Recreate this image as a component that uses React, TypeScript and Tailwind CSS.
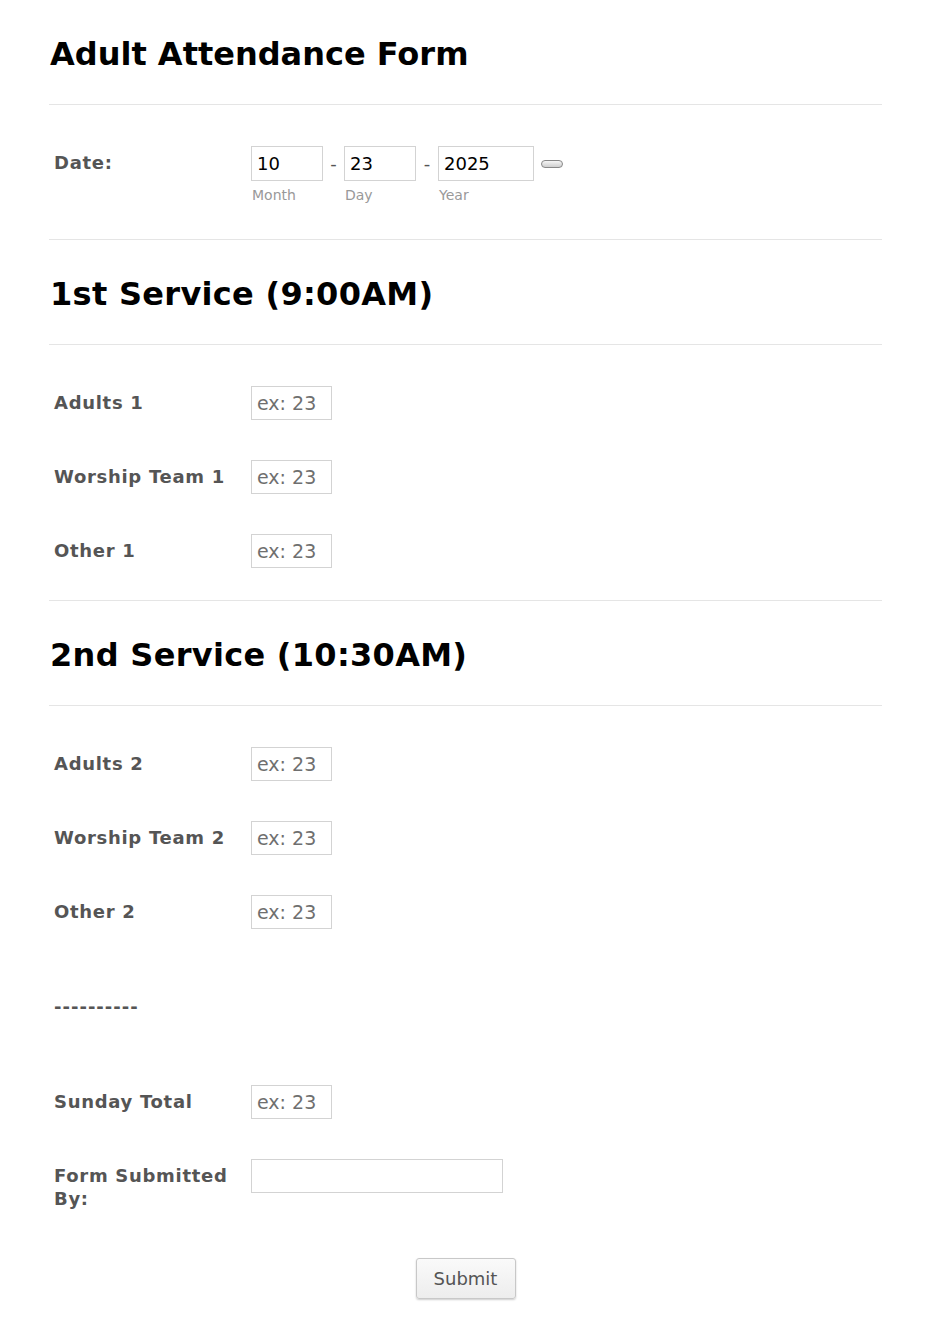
import React from "react";

const font = { fontFamily: '"DejaVu Sans", Verdana, sans-serif' };

function Divider() {
  return <div className="h-px bg-[#e5e5e5]" />;
}

function Heading({ children }: { children: React.ReactNode }) {
  return (
    <div className="pl-[1px] pt-[34px] pb-[30px]">
      <h2 className="text-[32px] leading-[40px] font-bold tracking-[0.3px] text-black">{children}</h2>
    </div>
  );
}

function Label({ children }: { children: React.ReactNode }) {
  return (
    <div className="w-[202px] shrink-0 pl-[5px] pr-[20px] pt-[5px] text-[18px] leading-[23px] font-bold tracking-[0.7px] text-[#555]">
      {children}
    </div>
  );
}

function NumberRow({ label }: { label: string }) {
  return (
    <div className="flex items-start">
      <Label>{label}</Label>
      <input
        type="text"
        placeholder="ex: 23"
        className="w-[81px] h-[34px] border border-[#d3d3d3] px-[5px] text-[19px] text-black placeholder:text-[#6f6f6f] outline-none"
        style={font}
      />
    </div>
  );
}

function DatePart({ value, sub, w }: { value: string; sub: string; w: string }) {
  return (
    <div className="flex flex-col">
      <input
        type="text"
        defaultValue={value}
        className={`${w} h-[35px] border border-[#d3d3d3] px-[5px] text-[18px] text-black outline-none`}
        style={font}
      />
      <span className="mt-[6px] pl-[1px] text-[14px] leading-[16px] text-[#999]">{sub}</span>
    </div>
  );
}

export default function App() {
  return (
    <div className="min-h-[1330px] bg-white" style={font}>
      <div className="ml-[49px] w-[833px]">
        <div className="pt-[34px] pb-[30px]">
          <h1 className="pl-[1px] text-[32px] leading-[40px] font-bold text-black">Adult Attendance Form</h1>
        </div>
        <Divider />

        <div className="flex items-start pt-[41px] pb-[36px]">
          <Label>Date:</Label>
          <div className="flex items-start">
            <DatePart value="10" sub="Month" w="w-[72px]" />
            <span className="w-[21px] text-center text-[18px] leading-[35px] text-[#555]">-</span>
            <DatePart value="23" sub="Day" w="w-[72px]" />
            <span className="w-[22px] text-center text-[18px] leading-[35px] text-[#555]">-</span>
            <DatePart value="2025" sub="Year" w="w-[96px]" />
            <button className="ml-[7px] mt-[14px] w-[22px] h-[8px] rounded-full border border-[#888] bg-gradient-to-b from-[#f5f5f5] to-[#cfcfcf]" />
          </div>
        </div>
        <Divider />

        <Heading>1st Service (9:00AM)</Heading>
        <Divider />
        <div className="flex flex-col gap-[40px] pt-[41px] pb-[32px]">
          <NumberRow label="Adults 1" />
          <NumberRow label="Worship Team 1" />
          <NumberRow label="Other 1" />
        </div>
        <Divider />

        <Heading>2nd Service (10:30AM)</Heading>
        <Divider />
        <div className="flex flex-col gap-[40px] pt-[41px]">
          <NumberRow label="Adults 2" />
          <NumberRow label="Worship Team 2" />
          <NumberRow label="Other 2" />
        </div>

        <div className="mt-[61px] pl-[5px] text-[18px] leading-[33px] font-bold tracking-[1px] text-[#555]">
          ----------
        </div>

        <div className="mt-[62px] flex flex-col gap-[40px]">
          <NumberRow label="Sunday Total" />
          <div className="flex items-start">
            <Label>Form Submitted By:</Label>
            <input
              type="text"
              className="w-[252px] h-[34px] border border-[#d3d3d3] px-[5px] text-[18px] outline-none"
              style={font}
            />
          </div>
        </div>

        <div className="mt-[48px] flex justify-center">
          <button
            className="w-[100px] h-[41px] rounded-[3px] border border-[#c8c8c8] bg-gradient-to-b from-[#fafafa] to-[#ededed] text-[18px] text-[#555] shadow-[0_1px_2px_rgba(0,0,0,0.2)]"
            style={font}
          >
            Submit
          </button>
        </div>
      </div>
    </div>
  );
}
